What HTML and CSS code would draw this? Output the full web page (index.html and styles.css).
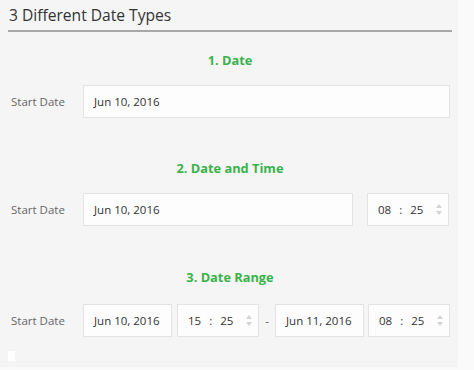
FILE: index.html
```html
<!DOCTYPE html>
<html>
<head>
<meta charset="utf-8">
<link rel="stylesheet" href="styles.css">
</head>
<body>
<div class="page">
  <h1 class="title">3 Different Date Types</h1>

  <section class="section first">
    <h2 class="heading">1. Date</h2>
    <div class="row">
      <span class="label">Start Date</span>
      <div class="box date wide">Jun 10, 2016</div>
    </div>
  </section>

  <section class="section second">
    <h2 class="heading">2. Date and Time</h2>
    <div class="row">
      <span class="label">Start Date</span>
      <div class="box date mid">Jun 10, 2016</div>
      <div class="box time gap14"><span class="hh">08</span><span class="colon">:</span><span class="mm">25</span><span class="spin"><i class="up"></i><i class="down"></i></span></div>
    </div>
  </section>

  <section class="section third">
    <h2 class="heading">3. Date Range</h2>
    <div class="row">
      <span class="label">Start Date</span>
      <div class="box date small">Jun 10, 2016</div>
      <div class="box time gap5"><span class="hh">15</span><span class="colon">:</span><span class="mm">25</span><span class="spin"><i class="up"></i><i class="down"></i></span></div>
      <span class="dash">-</span>
      <div class="box date small">Jun 11, 2016</div>
      <div class="box time gap4"><span class="hh">08</span><span class="colon">:</span><span class="mm">25</span><span class="spin"><i class="up"></i><i class="down"></i></span></div>
    </div>
  </section>

  <div class="tiny"></div>
</div>
</body>
</html>
```

FILE: styles.css
```css
html, body {
  margin: 0;
  padding: 0;
}
body {
  background: #fafafa;
  font-family: "Open Sans", "Liberation Sans", sans-serif;
  color: #333;
  width: 474px;
  height: 370px;
  overflow: hidden;
}
.page {
  background: #f5f5f5;
  width: 458px;
  height: 367px;
  padding: 4px 0 0 8px;
  box-sizing: border-box;
}
.title {
  width: 444px;
  margin: 0;
  font-size: 15.6px;
  font-weight: normal;
  line-height: 23px;
  padding: 0 0 3px 1px;
  box-sizing: border-box;
  border-bottom: 2px solid #a8a8a8;
  color: #333;
}
.section {
  width: 444px;
  margin-top: 40px;
}
.section.first {
  margin-top: 19px;
}
.section.second {
  margin-top: 41px;
}
.section.third {
  margin-top: 42px;
}
.heading {
  margin: 0 0 16px;
  text-align: center;
  font-size: 12.8px;
  line-height: 18px;
  font-weight: bold;
  color: #38b34a;
}
.third .heading {
  margin-bottom: 18px;
}
.row {
  display: flex;
  align-items: center;
  height: 33px;
}
.label {
  width: 72px;
  padding-left: 3px;
  font-size: 11.5px;
  color: #666;
  flex: none;
}
.box {
  height: 33px;
  box-sizing: border-box;
  background: #fdfdfd;
  border: 1px solid #e3e3e3;
  display: flex;
  align-items: center;
  font-size: 11.5px;
  color: #333;
  flex: none;
}
.date {
  padding-left: 10px;
}
.date.wide { width: 367px; }
.date.mid { width: 270px; }
.date.small { width: 89px; }
.time {
  width: 82px;
  padding-left: 10px;
  position: relative;
}
.gap14 { margin-left: 14px; }
.gap5 { margin-left: 5px; }
.gap4 { margin-left: 4px; }
.colon {
  margin: 0 8px;
}
.spin {
  position: absolute;
  right: 6px;
  top: 10px;
  display: flex;
  flex-direction: column;
  gap: 3px;
}
.spin i {
  display: block;
  width: 0;
  height: 0;
  border-left: 3px solid transparent;
  border-right: 3px solid transparent;
}
.spin .up { border-bottom: 4px solid #d4d4d4; }
.spin .down { border-top: 4px solid #d4d4d4; }
.dash {
  width: 16px;
  text-align: center;
  font-size: 11.5px;
  color: #555;
  flex: none;
}
.tiny {
  margin-top: 14px;
  width: 7px;
  height: 10px;
  background: #fff;
}
```
